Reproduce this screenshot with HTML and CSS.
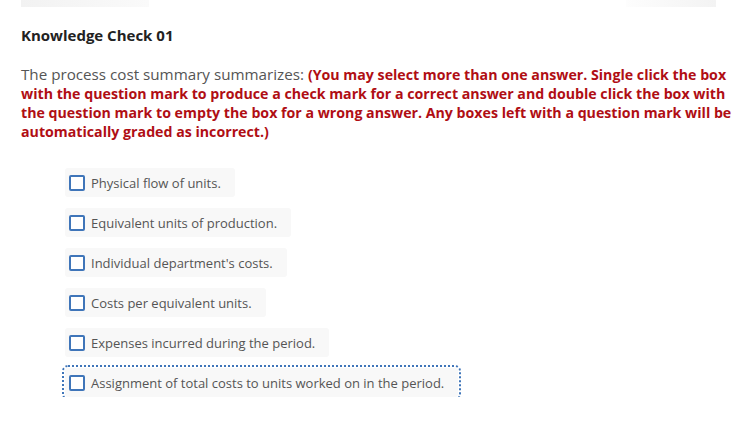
FILE: index.html
```html
<!DOCTYPE html>
<html>
<head>
<meta charset="utf-8">
<link rel="stylesheet" href="styles.css">
</head>
<body>
<div class="topbar">
  <div class="strip strip-left"></div>
  <div class="strip strip-right"></div>
</div>
<main class="page">
  <h1 class="title">Knowledge Check 01</h1>
  <p class="question">The process cost summary summarizes: <strong class="note">(You may select more than one answer. Single click the box with the question mark to produce a check mark for a correct answer and double click the box with the question mark to empty the box for a wrong answer. Any boxes left with a question mark will be automatically graded as incorrect.)</strong></p>
  <ul class="options">
    <li><span class="opt"><span class="box"></span>Physical flow of units.</span></li>
    <li><span class="opt"><span class="box"></span>Equivalent units of production.</span></li>
    <li><span class="opt"><span class="box"></span>Individual department's costs.</span></li>
    <li><span class="opt"><span class="box"></span>Costs per equivalent units.</span></li>
    <li><span class="opt"><span class="box"></span>Expenses incurred during the period.</span></li>
    <li><span class="opt focused"><span class="box"></span>Assignment of total costs to units worked on in the period.</span></li>
  </ul>
</main>
</body>
</html>
```

FILE: styles.css
```css
html, body {
  margin: 0;
  padding: 0;
  background: #fff;
}
body {
  font-family: "Open Sans", "Liberation Sans", sans-serif;
  color: #555;
}
.topbar {
  height: 8px;
  display: flex;
  justify-content: space-between;
  padding: 0 36px 0 21px;
}
.strip {
  height: 7px;
  background: linear-gradient(90deg, #f2f2f2, #fafafa);
}
.strip-left { width: 128px; }
.strip-right { width: 90px; background: linear-gradient(90deg, #fdfdfd, #f3f3f3); }
.page {
  padding: 0 8px 0 21px;
}
.title {
  margin: 18px 0 0;
  font-size: 15px;
  font-weight: 700;
  color: #222;
  line-height: 18px;
}
.question {
  margin: 21px 0 0;
  font-size: 15.2px;
  line-height: 18px;
  color: #555;
}
.note {
  color: #b00e14;
  font-weight: 700;
  font-size: 14.2px;
}
.options {
  list-style: none;
  margin: 27px 0 0;
  padding: 0 0 0 44px;
  display: flex;
  flex-direction: column;
  gap: 11px;
}
.options li {
  display: block;
}
.opt {
  display: inline-flex;
  align-items: center;
  height: 29px;
  padding: 0 14px 0 4px;
  background: #f8f8f8;
  border-radius: 3px;
  font-size: 13px;
  color: #555;
  box-sizing: border-box;
}
.box {
  width: 16px;
  height: 16px;
  box-sizing: border-box;
  border: 2px solid #3f75b9;
  border-radius: 2px;
  margin-right: 6px;
  background: #fff;
  flex: none;
}
.focused {
  outline: 2px dotted #3f75b9;
  outline-offset: 1px;
}
```
